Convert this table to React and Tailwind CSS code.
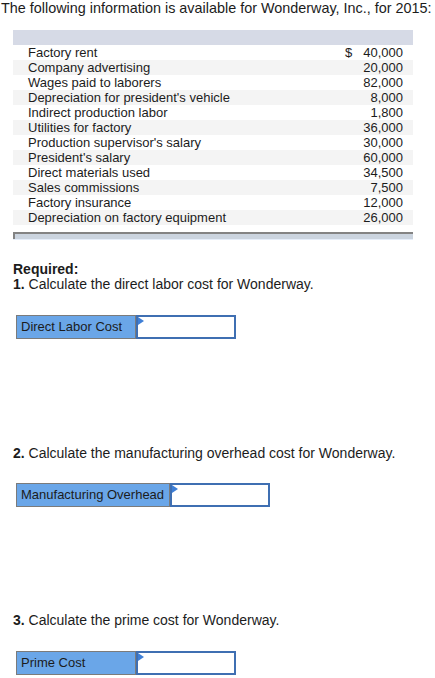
const ROWS = [
  ['Factory rent', '40,000', true],
  ['Company advertising', '20,000'],
  ['Wages paid to laborers', '82,000'],
  ["Depreciation for president's vehicle", '8,000'],
  ['Indirect production labor', '1,800'],
  ['Utilities for factory', '36,000'],
  ["Production supervisor's salary", '30,000'],
  ["President's salary", '60,000'],
  ['Direct materials used', '34,500'],
  ['Sales commissions', '7,500'],
  ['Factory insurance', '12,000'],
  ['Depreciation on factory equipment', '26,000'],
]

function AnswerRow({ label, labelW }) {
  return (
    <div className="flex h-[24px] ml-[16px]">
      <div
        className={`${labelW} h-full bg-[#6aa6e8] border border-[#7b7b7b] pl-[4px] text-[13px] leading-[22px] text-[#1c1c1c]`}
      >
        {label}
      </div>
      <div className="relative w-[100px] h-full bg-white border-2 border-[#3f6fb2]">
        <span className="absolute left-0 top-0 w-0 h-0 border-t-[4px] border-b-[4px] border-l-[6px] border-t-transparent border-b-transparent border-l-[#3f7fd6]" />
      </div>
    </div>
  )
}

export default function App() {
  return (
    <div className="w-[435px] h-[678px] bg-white text-[#1c1c1c] font-['Liberation_Sans',Arial,sans-serif] overflow-hidden">
      <p className="text-[14.4px] leading-[16px] pl-px whitespace-nowrap">
        The following information is available for Wonderway, Inc., for 2015:
      </p>

      <div className="ml-[13px] mt-[14px] w-[400px]">
        <div className="h-[15px] bg-[#d6dae6]" />
        {ROWS.map(([name, amt, dollar], i) => (
          <div
            key={name}
            className={`flex h-[15px] pl-[15px] pr-[10px] text-[13px] leading-[15px] ${i % 2 ? 'bg-[#f4f4f4]' : 'bg-white'}`}
          >
            <span className="flex-1">{name}</span>
            <span className="flex w-[58px] justify-between">
              <span>{dollar ? '$' : ''}</span>
              <span>{amt}</span>
            </span>
          </div>
        ))}
        <div className="h-[7px]" />
        <div className="h-[7px] bg-[#cbd4df] border-t-2 border-l-2 border-[#838383] shadow-[0_1px_0_#e6eefa]" />
      </div>

      <div className="ml-[13px] mt-[23px] text-[14px] leading-[15px]">
        <p className="font-bold">Required:</p>
        <p>
          <span className="font-bold">1.</span> Calculate the direct labor cost for Wonderway.
        </p>
      </div>
      <div className="mt-[23px]">
        <AnswerRow label="Direct Labor Cost" labelW="w-[120px]" />
      </div>

      <p className="ml-[13px] mt-[107px] text-[14px] leading-[15px]">
        <span className="font-bold">2.</span> Calculate the manufacturing overhead cost for Wonderway.
      </p>
      <div className="mt-[22px]">
        <AnswerRow label="Manufacturing Overhead" labelW="w-[154px]" />
      </div>

      <p className="ml-[13px] mt-[106px] text-[14px] leading-[15px]">
        <span className="font-bold">3.</span> Calculate the prime cost for Wonderway.
      </p>
      <div className="mt-[23px]">
        <AnswerRow label="Prime Cost" labelW="w-[120px]" />
      </div>
    </div>
  )
}
